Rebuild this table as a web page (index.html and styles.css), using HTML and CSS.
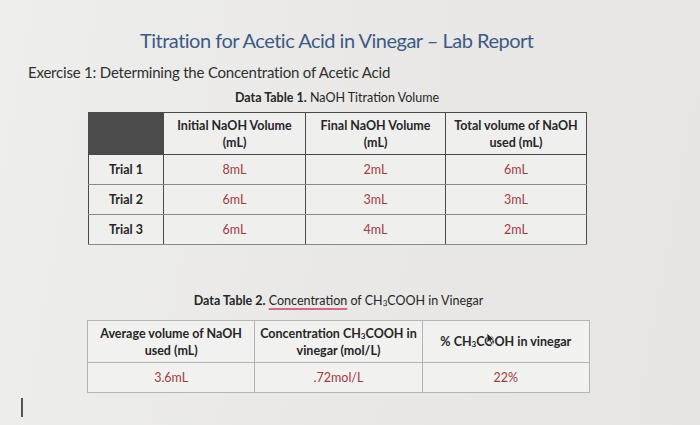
FILE: index.html
```html
<!DOCTYPE html>
<html>
<head>
<meta charset="utf-8">
<link rel="stylesheet" href="styles.css">
</head>
<body>
<div class="page">
  <h1 class="title">Titration for Acetic Acid in Vinegar – Lab Report</h1>
  <h2 class="exercise">Exercise 1: Determining the Concentration of Acetic Acid</h2>
  <div class="block block1">
    <p class="caption"><b>Data Table 1.</b> NaOH Titration Volume</p>
    <table class="t1">
      <colgroup><col class="c0"><col class="c1"><col class="c2"><col class="c3"></colgroup>
      <tr class="head">
        <th class="dark"></th>
        <th>Initial NaOH Volume<br>(mL)</th>
        <th>Final NaOH Volume<br>(mL)</th>
        <th>Total volume of NaOH<br>used (mL)</th>
      </tr>
      <tr><th>Trial 1</th><td>8mL</td><td>2mL</td><td>6mL</td></tr>
      <tr><th>Trial 2</th><td>6mL</td><td>3mL</td><td>3mL</td></tr>
      <tr><th>Trial 3</th><td>6mL</td><td>4mL</td><td>2mL</td></tr>
    </table>
  </div>
  <div class="block block2">
    <p class="caption"><b>Data Table 2.</b> <span class="squiggle">Concentration</span> of CH<sub>3</sub>COOH in Vinegar</p>
    <table class="t2">
      <tr class="head">
        <th>Average volume of NaOH<br>used (mL)</th>
        <th>Concentration CH<sub>3</sub>COOH in<br>vinegar (mol/L)</th>
        <th class="pct">% CH<sub>3</sub>COOH in vinegar<svg class="pointer" width="9" height="14" viewBox="0 0 9 14"><path d="M1 1 L1 11 L3.5 8.8 L5.5 13 L7 12.3 L5 8.2 L8.2 8 Z" fill="#222" stroke="#eee" stroke-width="0.8"/></svg></th>
      </tr>
      <tr><td>3.6mL</td><td>.72mol/L</td><td>22%</td></tr>
    </table>
  </div>
  <div class="caret"></div>
</div>
</body>
</html>
```
FILE: styles.css
```css
html, body {
  margin: 0;
  padding: 0;
}
body {
  width: 700px;
  height: 425px;
  overflow: hidden;
  background: linear-gradient(100deg, #eeeeec 0%, #e9e8e6 50%, #e6e5e3 100%);
  font-family: Lato, "Open Sans", sans-serif;
  color: #2a2a2a;
}
.page {
  position: relative;
  padding-top: 28px;
}
.title {
  margin: 0 0 0 140px;
  font-size: 20px;
  font-weight: 400;
  color: #3d5a86;
  line-height: 24px;
  letter-spacing: -0.5px;
}
.exercise {
  margin: 10px 0 0 28px;
  font-size: 15px;
  font-weight: 400;
  color: #303030;
  line-height: 20px;
  letter-spacing: -0.2px;
}
.block {
  margin-left: 88px;
}
.block1 { width: 498px; }
.block2 { width: 503px; margin-left: 87px; margin-top: 48px; }
.caption {
  margin: 8px 0 0;
  text-align: center;
  font-size: 12.5px;
  line-height: 16px;
  color: #262626;
}
.caption b { font-weight: 700; }
.block2 .caption { margin-top: 0; }
sub {
  font-size: 0.65em;
  vertical-align: -0.15em;
  line-height: 0;
}
.squiggle {
  text-decoration: underline solid #d26a82;
  text-decoration-thickness: 1.5px;
  text-underline-offset: 3px;
}
table {
  border-collapse: collapse;
  table-layout: fixed;
  background: #efefee;
  font-size: 12.5px;
}
.t1 {
  width: 498px;
  margin-top: 6px;
}
.t1 .c0 { width: 75px; }
.t1 .c1 { width: 142px; }
.t1 .c2 { width: 140px; }
.t1 .c3 { width: 141px; }
.t1 th, .t1 td {
  border: 1.5px solid #4a4a4a;
  text-align: center;
  padding: 0;
  height: 29px;
}
.t1 .head th { height: 41px; line-height: 17px; font-weight: 700; color: #262626; }
.t1 th { font-weight: 700; color: #262626; }
.t1 .dark { background: #4b4b4b; }
td { color: #a03c3e; }
.t1 tr:not(.head) th, .t1 td { border-top-color: #8a8a8a; border-bottom-color: #8a8a8a; }
.t2 {
  width: 503px;
  margin-top: 11px;
  background: #f1f1f0;
}
.t2 th, .t2 td {
  border: 1.5px solid #b4b4b2;
  text-align: center;
  padding: 0;
}
.t2 .head th { height: 41px; line-height: 17px; font-weight: 700; color: #262626; }
.t2 td { height: 29px; }
.pct { position: relative; }
.pointer {
  position: absolute;
  left: 63px;
  top: 11px;
}
.caret {
  position: absolute;
  left: 21px;
  top: 398px;
  width: 1.5px;
  height: 19px;
  background: #555;
}
```
